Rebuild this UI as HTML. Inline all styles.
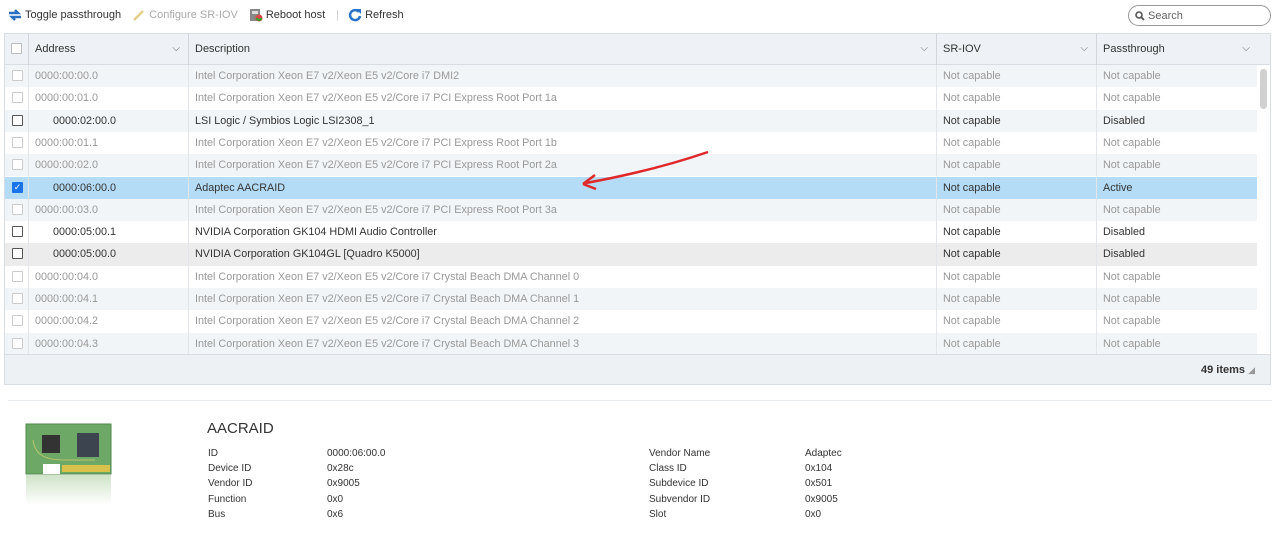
<!DOCTYPE html>
<html><head><style>
*{box-sizing:border-box;margin:0;padding:0}
body{width:1280px;height:544px;background:#fff;font-family:"Liberation Sans",Arial,sans-serif;font-size:11px;color:#333;position:relative;overflow:hidden}
.tb{position:absolute;top:7px;left:8px;height:16px;display:flex;align-items:center;font-size:11px}
.tb span{display:flex;align-items:center;margin-right:11px}
.search{position:absolute;left:1128px;top:5px;width:143px;height:21px;border:1px solid #999;border-radius:11px;font-size:11px;color:#666;padding:4px 0 0 19px}
.grid{position:absolute;left:4px;top:33px;width:1267px;height:352px;border:1px solid #d8dde3;background:#fff}
.hdr{position:absolute;top:0;left:0;width:1265px;height:31px;background:#eef2f6;border-bottom:1px solid #d8dde3}
.hc{position:absolute;top:0;height:31px;border-right:1px solid #d0d6dc;padding:9px 0 0 6px;font-size:11px;color:#333}
.hc i{position:absolute;right:8px;top:9px;font-style:normal;font-size:10px;color:#666}
.row{position:absolute;left:0;width:1252px;height:22.3px;font-size:10.8px}
.row div{position:absolute;top:0;height:100%;padding-top:5px;border-right:1px solid #e2e6ea;white-space:nowrap}
.g{color:#999}
.cb{width:11px;height:11px;border:1px solid #bbb;position:absolute;left:7px;top:5px;background:#fff;border-radius:1px}
.foot{position:absolute;left:0;top:320px;width:1265px;height:30px;background:#eef1f4;border-top:1px solid #d8dde3;font-size:11px;font-weight:bold;text-align:right;padding:9px 15px 0 0}
.sb{position:absolute;left:1253px;top:31px;width:12px;height:289px;background:#fff}
.sb div{position:absolute;left:2px;top:4px;width:7px;height:40px;background:#d0d0d0;border-radius:4px}
.det{position:absolute;font-size:10px;color:#333}
</style></head><body>
<div class="tb">
<span><svg width="14" height="14" viewBox="0 0 14 14"><path d="M1 5h9l-3-3M13 9H4l3 3" stroke="#2a6fc1" stroke-width="2.5" fill="none"/></svg>&nbsp;Toggle passthrough</span>
<span style="color:#aaa"><svg width="14" height="14"><path d="M2 12L11 3" stroke="#e3cf8a" stroke-width="2.5"/></svg>&nbsp;Configure SR-IOV</span>
<span><svg width="14" height="14"><rect x="1" y="1" width="10" height="12" fill="#888"/><rect x="3" y="3" width="6" height="3" fill="#ddd"/><circle cx="10" cy="10" r="3.5" fill="#d44"/><path d="M8 10a2 2 0 1 0 4 0" stroke="#2a2" stroke-width="2" fill="none"/></svg>&nbsp;Reboot host</span>
<span style="color:#ccc;margin-right:9px">|</span>
<span><svg width="14" height="14" viewBox="0 0 14 14"><path d="M11 4A5 5 0 1 0 12 8" stroke="#2a73c9" stroke-width="2.5" fill="none"/><path d="M8 1h5v5z" fill="#2a73c9"/></svg>&nbsp;Refresh</span>
</div>
<div class="search"><svg style="position:absolute;left:6px;top:5px" width="10" height="10"><circle cx="4" cy="4" r="3" stroke="#555" stroke-width="1.6" fill="none"/><path d="M6 6l3 3" stroke="#555" stroke-width="1.8"/></svg>Search</div>
<div class="grid">
<div class="hdr">
<div class="hc" style="left:0;width:24px"><span class="cb" style="top:9px;left:6px"></span></div>
<div class="hc" style="left:24px;width:160px">Address<i>⌵</i></div>
<div class="hc" style="left:184px;width:748px">Description<i>⌵</i></div>
<div class="hc" style="left:932px;width:160px">SR-IOV<i>⌵</i></div>
<div class="hc" style="left:1092px;width:173px;border-right:0">Passthrough<i style="right:20px">⌵</i></div>
</div>
<div id="rows"></div>
<div class="sb"><div></div></div>
<div class="foot">49 items <span style="color:#999;font-weight:normal;font-size:9px">◢</span></div>
</div>
<svg style="position:absolute;left:0;top:0" width="1280" height="544"><path d="M708 152C670 165 630 175 586 183" stroke="#e0272a" stroke-width="2.5" fill="none"/><path d="M583 184l12-9M583 184l13 5" stroke="#e0272a" stroke-width="2.5" fill="none"/></svg>
<div style="position:absolute;left:8px;top:400px;width:1264px;height:1px;background:#e8ecef"></div>
<svg style="position:absolute;left:25px;top:420px" width="88" height="88"><defs><linearGradient id="f" x1="0" y1="0" x2="0" y2="1"><stop offset="0" stop-color="#cfe3c8"/><stop offset="1" stop-color="#fff"/></linearGradient></defs><rect x="1" y="4" width="85" height="50" fill="#6ea866" stroke="#4e8a48"/><rect x="1" y="55" width="85" height="30" fill="url(#f)"/><rect x="17" y="15" width="18" height="18" fill="#333"/><rect x="52" y="13" width="22" height="24" fill="#3c4450"/><rect x="18" y="44" width="17" height="10" fill="#fff"/><rect x="37" y="45" width="48" height="7" fill="#d9c24b"/><path d="M8 20C10 35 20 40 40 40h30" stroke="#b8c46a" fill="none"/></svg>
<div class="det" style="left:207px;top:420px;font-size:15px">AACRAID</div>
<div class="det" style="left:208px;top:446px;line-height:15.2px">ID<br>Device ID<br>Vendor ID<br>Function<br>Bus</div>
<div class="det" style="left:327px;top:446px;line-height:15.2px">0000:06:00.0<br>0x28c<br>0x9005<br>0x0<br>0x6</div>
<div class="det" style="left:649px;top:446px;line-height:15.2px">Vendor Name<br>Class ID<br>Subdevice ID<br>Subvendor ID<br>Slot</div>
<div class="det" style="left:805px;top:446px;line-height:15.2px">Adaptec<br>0x104<br>0x501<br>0x9005<br>0x0</div>
<script>
var P="Intel Corporation Xeon E7 v2/Xeon E5 v2/Core i7 ";
var R=[["0000:00:00.0",P+"DMI2",0],["0000:00:01.0",P+"PCI Express Root Port 1a",0],["0000:02:00.0","LSI Logic / Symbios Logic LSI2308_1",1,"Disabled"],["0000:00:01.1",P+"PCI Express Root Port 1b",0],["0000:00:02.0",P+"PCI Express Root Port 2a",0],["0000:06:00.0","Adaptec AACRAID",2,"Active"],["0000:00:03.0",P+"PCI Express Root Port 3a",0],["0000:05:00.1","NVIDIA Corporation GK104 HDMI Audio Controller",1,"Disabled"],["0000:05:00.0","NVIDIA Corporation GK104GL [Quadro K5000]",1,"Disabled"],["0000:00:04.0",P+"Crystal Beach DMA Channel 0",0],["0000:00:04.1",P+"Crystal Beach DMA Channel 1",0],["0000:00:04.2",P+"Crystal Beach DMA Channel 2",0],["0000:00:04.3",P+"Crystal Beach DMA Channel 3",0]];
var h="";R.forEach(function(r,i){var bg=r[2]==2?"#b5dcf7":(i==8?"#ececec":(i%2==0?"#f2f5f8":"#fff"));var c=r[2]?"":" g";var ind=r[2]?24:6;
var cb=r[2]==2?'<span class="cb" style="background:#1a73e8;border-color:#1a73e8;color:#fff;font-size:9px;line-height:9px;text-align:center">✓</span>':'<span class="cb" style="'+(r[2]?'border-color:#555':'border-color:#ccc')+'"></span>';
h+='<div class="row" style="top:'+(31+i*22.3)+'px;background:'+bg+'"><div style="left:0;width:24px">'+cb+'</div><div class="'+c+'" style="left:24px;width:160px;padding-left:'+ind+'px">'+r[0]+'</div><div class="'+c+'" style="left:184px;width:748px;padding-left:6px">'+r[1]+'</div><div class="'+c+'" style="left:932px;width:160px;padding-left:6px">Not capable</div><div class="'+c+'" style="left:1092px;width:160px;padding-left:6px;border:0">'+(r[3]||"Not capable")+'</div></div>';});
document.getElementById("rows").innerHTML=h;
</script>
</body></html>
